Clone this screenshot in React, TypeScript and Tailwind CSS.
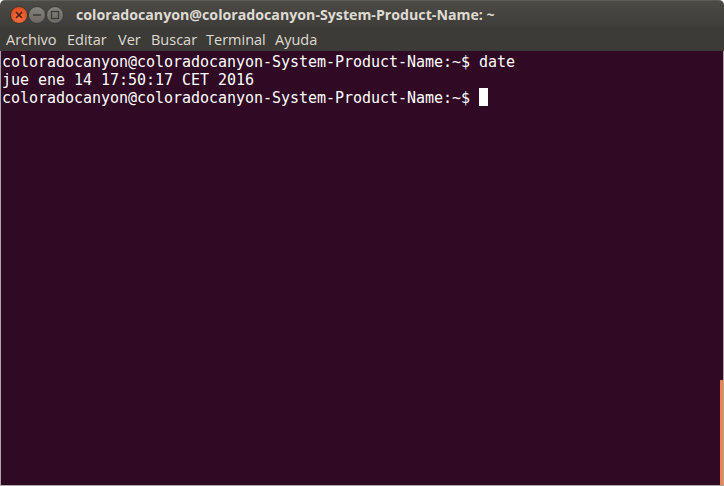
const menus = [
  { label: 'Archivo', width: 'w-[61px]' },
  { label: 'Editar', width: 'w-[51px]' },
  { label: 'Ver', width: 'w-[33px]' },
  { label: 'Buscar', width: 'w-[55px]' },
  { label: 'Terminal', width: 'w-[69px]' },
  { label: 'Ayuda', width: 'w-[45px]' },
];

const lines = [
  'coloradocanyon@coloradocanyon-System-Product-Name:~$ date',
  'jue ene 14 17:50:17 CET 2016',
];

function CloseButton() {
  return (
    <div className="w-[18px] h-[18px] rounded-full border border-[#3a3935] bg-[radial-gradient(circle_at_50%_70%,#f5703c,#d9441a)] flex items-center justify-center">
      <svg width="8" height="8" viewBox="0 0 8 8">
        <path d="M1 1L7 7M7 1L1 7" stroke="#4a2012" strokeWidth="1.6" />
      </svg>
    </div>
  );
}

function GreyButton({ kind }: { kind: 'min' | 'max' }) {
  return (
    <div className="w-[18px] h-[18px] rounded-full border border-[#3a3935] bg-[linear-gradient(#85837b,#6b6963)] flex items-center justify-center">
      <svg width="10" height="10" viewBox="0 0 10 10">
        {kind === 'min' ? (
          <path d="M1 5H9" stroke="#3b3a36" strokeWidth="1.4" />
        ) : (
          <rect x="1.5" y="1.5" width="7" height="7" fill="none" stroke="#3b3a36" strokeWidth="1.3" />
        )}
      </svg>
    </div>
  );
}

export default function App() {
  return (
    <div className="w-[724px] h-[486px] overflow-hidden bg-white">
      <div className="h-full flex flex-col rounded-t-[5px] overflow-hidden">
        <div className="h-[28px] shrink-0 flex items-center pl-[10px] bg-[linear-gradient(#4b4a45,#3e3d39)] border-t border-[#5c5b55]">
          <div className="flex mt-[1px]">
            <CloseButton />
            <GreyButton kind="min" />
            <GreyButton kind="max" />
          </div>
          <span className="ml-[12px] text-[14.2px] font-bold text-[#dfdbd2] font-['Open_Sans','Noto_Sans',sans-serif] whitespace-nowrap">
            coloradocanyon@coloradocanyon-System-Product-Name: ~
          </span>
        </div>
        <div className="h-[23px] shrink-0 flex items-center pl-[6px] bg-[#3c3b37] text-[14.5px] text-[#dfdbd2] font-['Open_Sans','Noto_Sans',sans-serif]">
          {menus.map((m) => (
            <span key={m.label} className={m.width}>{m.label}</span>
          ))}
        </div>
        <div className="relative flex-1 bg-[#300a24] border-l border-r border-b border-[#a8a8a4] font-['DejaVu_Sans_Mono',monospace] text-[15px] tracking-[-0.03px] leading-[18px] text-white pl-[1px] pt-[2px]">
          {lines.map((l) => (
            <div key={l} className="whitespace-pre">{l}</div>
          ))}
          <div className="flex whitespace-pre">
            <span>coloradocanyon@coloradocanyon-System-Product-Name:~$ </span>
            <span className="w-[9px] h-[18px] -mt-[1px] bg-white" />
          </div>
          <div className="absolute right-0 bottom-0 w-[3px] h-[105px] bg-[#f18150]" />
        </div>
      </div>
    </div>
  );
}
